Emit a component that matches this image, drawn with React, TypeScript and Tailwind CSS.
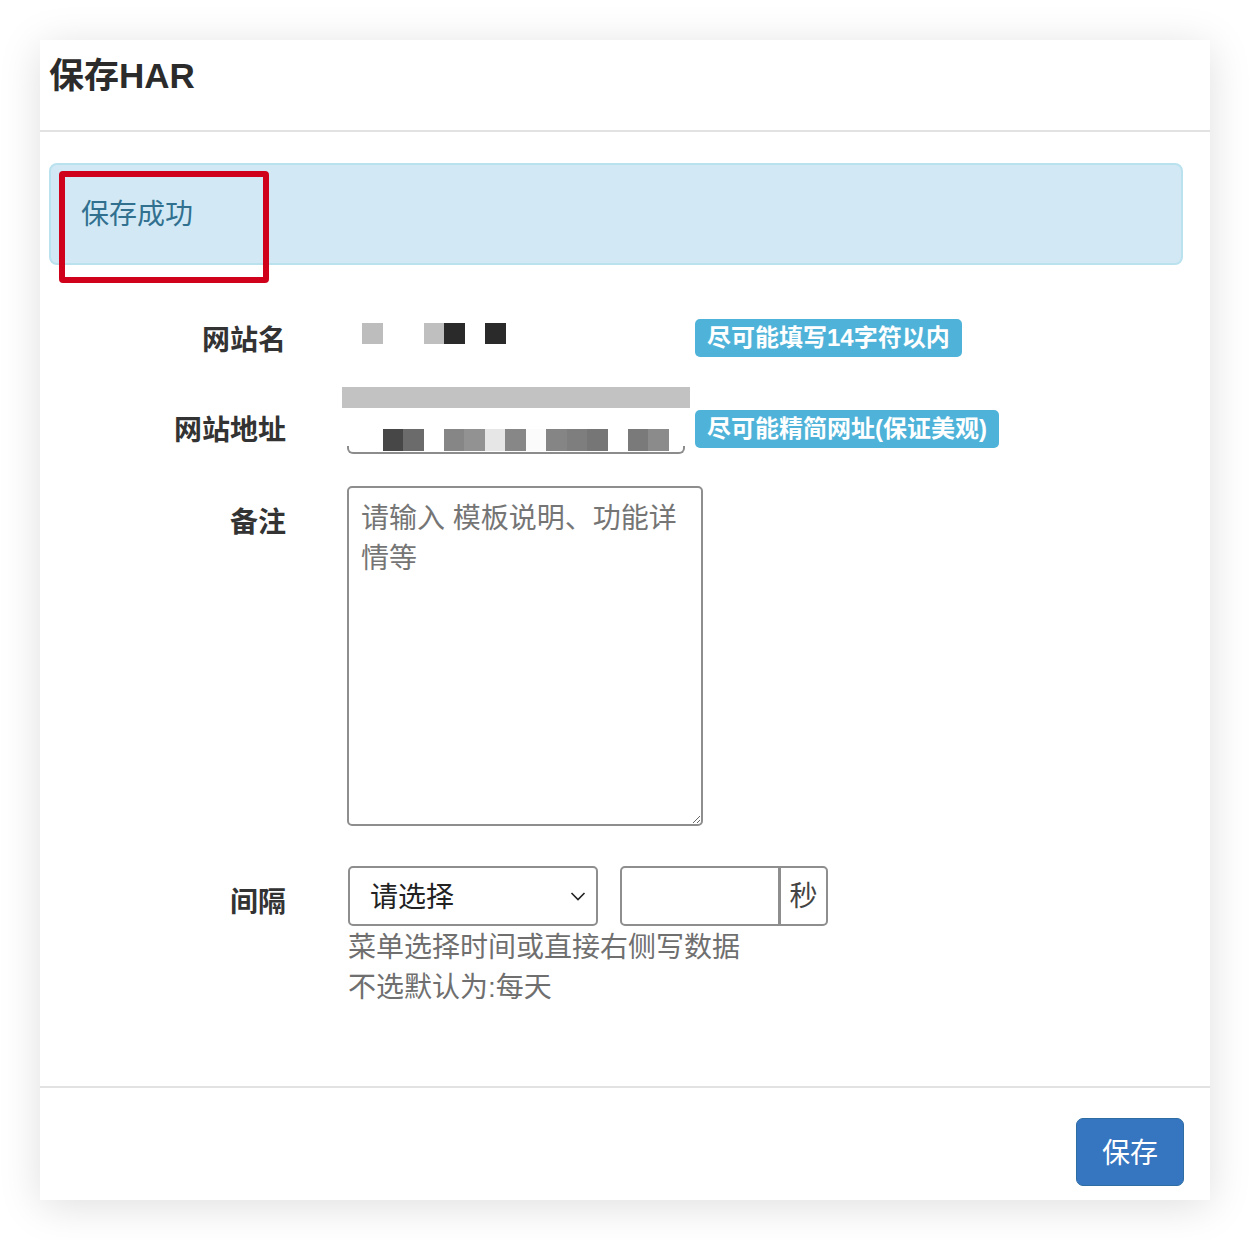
import React from 'react';

const FONT = { fontFamily: '"Liberation Sans", "Noto Sans CJK SC", sans-serif' };

// mosaic blocks standing in for redacted input text
const nameBlocks = [
  { w: 21, c: '#bdbdbd' }, { w: 41, c: 'transparent' }, { w: 20, c: '#bfbfbf' },
  { w: 21, c: '#2a2a2a' }, { w: 20, c: 'transparent' }, { w: 21, c: '#2a2a2a' },
];
const urlBlocks = [
  { w: 20, c: '#474747' }, { w: 21, c: '#6b6b6b' }, { w: 20, c: 'transparent' },
  { w: 20, c: '#868686' }, { w: 21, c: '#929292' }, { w: 20, c: '#e6e6e6' },
  { w: 21, c: '#878787' }, { w: 20, c: '#fbfbfb' }, { w: 21, c: '#858585' },
  { w: 20, c: '#7e7e7e' }, { w: 21, c: '#767676' }, { w: 20, c: 'transparent' },
  { w: 20, c: '#7a7a7a' }, { w: 21, c: '#8b8b8b' },
];

function Mosaic({ blocks, h }: { blocks: { w: number; c: string }[]; h: number }) {
  return (
    <div className="flex">
      {blocks.map((b, i) => (
        <div key={i} style={{ width: b.w, height: h, background: b.c }} />
      ))}
    </div>
  );
}

function Label({ children, top }: { children: React.ReactNode; top: string }) {
  return (
    <div className={`w-[246px] shrink-0 pt-[3px] text-right text-[28px] leading-[38px] font-bold text-[#333] ${top}`}>
      {children}
    </div>
  );
}

function Badge({ children }: { children: React.ReactNode }) {
  return (
    <div className="h-[38px] px-[12px] rounded-[5px] bg-[#4fb3d9] text-white text-[24px] font-bold leading-[38px] whitespace-nowrap">
      {children}
    </div>
  );
}

export default function App() {
  return (
    <div className="min-h-[1240px] bg-white p-[40px]" style={FONT}>
      <div className="w-[1170px] h-[1160px] bg-white flex flex-col shadow-[0_6px_40px_rgba(0,0,0,0.13)]">
        {/* Header */}
        <div className="h-[92px] shrink-0 border-b-2 border-[#e2e2e2] pl-[9px] flex items-center">
          <h1 className="text-[35px] font-semibold text-[#2b2b2b] leading-none pb-[20px]">保存HAR</h1>
        </div>

        {/* Body */}
        <div className="flex-1 pl-[9px] pr-[27px] pt-[31px]">
          <div className="relative h-[102px] rounded-[8px] border-2 border-[#b9e2ee] bg-[#d2e9f5] pl-[30px] flex items-center">
            <span className="text-[28px] text-[#31708f] leading-none pt-[2px]">保存成功</span>
            <div className="absolute left-[8px] top-[6px] w-[210px] h-[112px] border-[6px] border-[#d0011b] rounded-[4px]" />
          </div>

          {/* 网站名 */}
          <div className="flex h-[38px] mt-[54px] -ml-[9px]">
            <Label top="">网站名</Label>
            <div className="ml-[56px] w-[348px] pl-[20px] pt-[4px]">
              <Mosaic blocks={nameBlocks} h={21} />
            </div>
            <div className="ml-[5px]"><Badge>尽可能填写14字符以内</Badge></div>
          </div>

          {/* 网站地址 */}
          <div className="flex mt-[30px] -ml-[9px]">
            <Label top="mt-[22px]">网站地址</Label>
            <div className="ml-[56px] w-[348px] flex flex-col">
              <div className="h-[21px] bg-[#c2c2c2]" />
              <div className="mt-[21px] pl-[41px]">
                <Mosaic blocks={urlBlocks} h={22} />
              </div>
              <div className="-mt-[5px] mx-[5px] w-[338px] h-[8px] border-x-2 border-b-2 border-[#8c8c8c] rounded-b-[6px]" />
            </div>
            <div className="ml-[5px] mt-[23px]"><Badge>尽可能精简网址(保证美观)</Badge></div>
          </div>

          {/* 备注 */}
          <div className="flex mt-[32px] -ml-[9px]">
            <Label top="mt-[15px]">备注</Label>
            <textarea
              placeholder="请输入 模板说明、功能详情等"
              className="ml-[61px] w-[356px] h-[340px] border-2 border-[#8e8e8e] rounded-[5px] px-[12px] pt-[11px] pb-[8px] text-[28px] leading-[40px] text-[#333] placeholder:text-[#757575] outline-none"
              style={FONT}
            />
          </div>

          {/* 间隔 */}
          <div className="flex mt-[40px] -ml-[9px]">
            <Label top="mt-[15px]">间隔</Label>
            <div className="ml-[62px] flex flex-col">
              <div className="flex">
                <div className="w-[250px] h-[60px] border-2 border-[#8e8e8e] rounded-[5px] pl-[20px] pr-[10px] flex items-center justify-between">
                  <span className="text-[28px] text-[#222] leading-none pt-[4px]">请选择</span>
                  <svg width="16" height="10" viewBox="0 0 16 10" fill="none" stroke="#222" strokeWidth="1.6">
                    <path d="M1.5 2l6.5 6.5L14.5 2" />
                  </svg>
                </div>
                <div className="ml-[22px] flex">
                  <div className="w-[160px] h-[60px] border-2 border-[#8e8e8e] rounded-l-[5px]" />
                  <div className="w-[49px] h-[60px] -ml-[1px] border-2 border-[#8e8e8e] rounded-r-[5px] flex items-center justify-center text-[28px] text-[#444] leading-none pt-[2px]">
                    秒
                  </div>
                </div>
              </div>
              <div className="text-[28px] leading-[40px] text-[#6f6f6f] pt-[2px]">
                <p>菜单选择时间或直接右侧写数据</p>
                <p>不选默认为:每天</p>
              </div>
            </div>
          </div>
        </div>

        {/* Footer */}
        <div className="h-[114px] shrink-0 border-t-2 border-[#e2e2e2] flex justify-end items-start pt-[30px] pr-[26px]">
          <button className="w-[108px] h-[68px] rounded-[7px] bg-[#3675bf] border border-[#2e6da4] text-white text-[28px] leading-none pt-[3px]">
            保存
          </button>
        </div>
      </div>
    </div>
  );
}
